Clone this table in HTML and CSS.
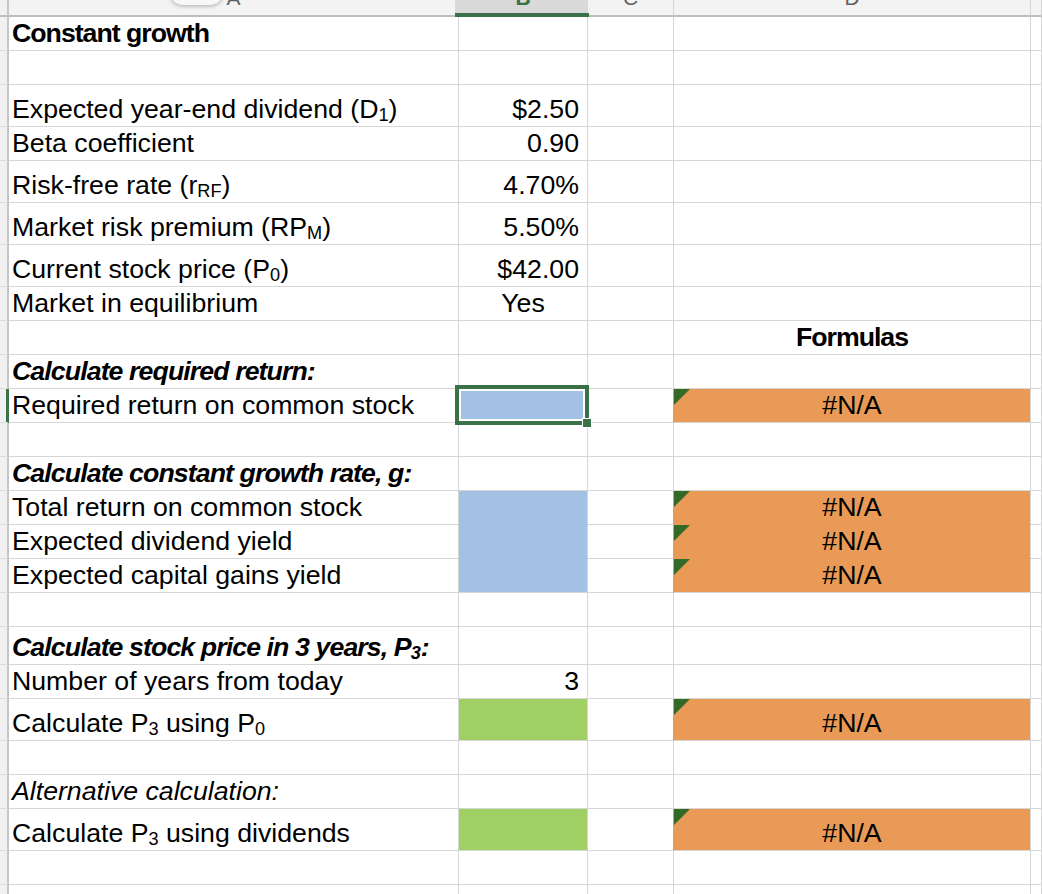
FILE: index.html
```html
<!DOCTYPE html>
<html lang="en">
<head>
<meta charset="utf-8">
<title>Constant growth</title>
<link rel="stylesheet" href="styles.css">
</head>
<body>
<div class="sheet">
  <div class="row hdr">
    <div class="rh"></div>
    <div class="ch"><span>A</span></div>
    <div class="ch sel"><span>B</span></div>
    <div class="ch"><span>C</span></div>
    <div class="ch"><span>D</span></div>
    <div class="ch"></div>
  </div>
  <div class="pill"></div>

  <div class="row">
    <div class="rh"></div>
    <div class="c bold"><span>Constant growth</span></div>
    <div class="c"></div><div class="c"></div><div class="c"></div><div class="c"></div>
  </div>
  <div class="row">
    <div class="rh"></div>
    <div class="c"></div><div class="c"></div><div class="c"></div><div class="c"></div><div class="c"></div>
  </div>
  <div class="row tall">
    <div class="rh"></div>
    <div class="c"><span>Expected year-end dividend (D<sub class="sb">1</sub>)</span></div>
    <div class="c num"><span>$2.50</span></div>
    <div class="c"></div><div class="c"></div><div class="c"></div>
  </div>
  <div class="row">
    <div class="rh"></div>
    <div class="c"><span>Beta coefficient</span></div>
    <div class="c num"><span>0.90</span></div>
    <div class="c"></div><div class="c"></div><div class="c"></div>
  </div>
  <div class="row tall">
    <div class="rh"></div>
    <div class="c"><span>Risk-free rate (r<sub class="sb">RF</sub>)</span></div>
    <div class="c num"><span>4.70%</span></div>
    <div class="c"></div><div class="c"></div><div class="c"></div>
  </div>
  <div class="row tall">
    <div class="rh"></div>
    <div class="c"><span>Market risk premium (RP<sub class="sb">M</sub>)</span></div>
    <div class="c num"><span>5.50%</span></div>
    <div class="c"></div><div class="c"></div><div class="c"></div>
  </div>
  <div class="row tall">
    <div class="rh"></div>
    <div class="c"><span>Current stock price (P<sub class="sb">0</sub>)</span></div>
    <div class="c num"><span>$42.00</span></div>
    <div class="c"></div><div class="c"></div><div class="c"></div>
  </div>
  <div class="row">
    <div class="rh"></div>
    <div class="c"><span>Market in equilibrium</span></div>
    <div class="c ctr"><span>Yes</span></div>
    <div class="c"></div><div class="c"></div><div class="c"></div>
  </div>
  <div class="row">
    <div class="rh"></div>
    <div class="c"></div><div class="c"></div><div class="c"></div>
    <div class="c ctr bold"><span>Formulas</span></div>
    <div class="c"></div>
  </div>
  <div class="row">
    <div class="rh"></div>
    <div class="c bi"><span>Calculate required return:</span></div>
    <div class="c"></div><div class="c"></div><div class="c"></div><div class="c"></div>
  </div>
  <div class="row">
    <div class="rh active"></div>
    <div class="c"><span>Required return on common stock</span></div>
    <div class="c blue"><div class="selbox"><div class="handle"></div></div></div>
    <div class="c edge"></div>
    <div class="c ctr orange err"><span>#N/A</span></div>
    <div class="c"></div>
  </div>
  <div class="row">
    <div class="rh"></div>
    <div class="c"></div><div class="c"></div><div class="c"></div><div class="c"></div><div class="c"></div>
  </div>
  <div class="row">
    <div class="rh"></div>
    <div class="c bi"><span>Calculate constant growth rate, g:</span></div>
    <div class="c"></div><div class="c"></div><div class="c"></div><div class="c"></div>
  </div>
  <div class="row">
    <div class="rh"></div>
    <div class="c"><span>Total return on common stock</span></div>
    <div class="c blue join"></div>
    <div class="c edge"></div>
    <div class="c ctr orange join err"><span>#N/A</span></div>
    <div class="c"></div>
  </div>
  <div class="row">
    <div class="rh"></div>
    <div class="c"><span>Expected dividend yield</span></div>
    <div class="c blue join"></div>
    <div class="c edge"></div>
    <div class="c ctr orange join err"><span>#N/A</span></div>
    <div class="c"></div>
  </div>
  <div class="row">
    <div class="rh"></div>
    <div class="c"><span>Expected capital gains yield</span></div>
    <div class="c blue"></div>
    <div class="c edge"></div>
    <div class="c ctr orange err"><span>#N/A</span></div>
    <div class="c"></div>
  </div>
  <div class="row">
    <div class="rh"></div>
    <div class="c"></div><div class="c"></div><div class="c"></div><div class="c"></div><div class="c"></div>
  </div>
  <div class="row mid">
    <div class="rh"></div>
    <div class="c bi"><span>Calculate stock price in 3 years, P<sub class="sb">3</sub>:</span></div>
    <div class="c"></div><div class="c"></div><div class="c"></div><div class="c"></div>
  </div>
  <div class="row">
    <div class="rh"></div>
    <div class="c"><span>Number of years from today</span></div>
    <div class="c num"><span>3</span></div>
    <div class="c"></div><div class="c"></div><div class="c"></div>
  </div>
  <div class="row tall">
    <div class="rh"></div>
    <div class="c"><span>Calculate P<sub class="sb">3</sub> using P<sub class="sb">0</sub></span></div>
    <div class="c green"></div>
    <div class="c edge"></div>
    <div class="c ctr orange err"><span>#N/A</span></div>
    <div class="c"></div>
  </div>
  <div class="row">
    <div class="rh"></div>
    <div class="c"></div><div class="c"></div><div class="c"></div><div class="c"></div><div class="c"></div>
  </div>
  <div class="row">
    <div class="rh"></div>
    <div class="c it"><span>Alternative calculation:</span></div>
    <div class="c"></div><div class="c"></div><div class="c"></div><div class="c"></div>
  </div>
  <div class="row tall">
    <div class="rh"></div>
    <div class="c"><span>Calculate P<sub class="sb">3</sub> using dividends</span></div>
    <div class="c green"></div>
    <div class="c edge"></div>
    <div class="c ctr orange err"><span>#N/A</span></div>
    <div class="c"></div>
  </div>
  <div class="row">
    <div class="rh"></div>
    <div class="c"></div><div class="c"></div><div class="c"></div><div class="c"></div><div class="c"></div>
  </div>
  <div class="row">
    <div class="rh"></div>
    <div class="c"></div><div class="c"></div><div class="c"></div><div class="c"></div><div class="c"></div>
  </div>
</div>
</body>
</html>
```
FILE: styles.css
```css
* { box-sizing: border-box; }
html, body { margin: 0; background: #fff; }
body {
  font-family: "Liberation Sans", Arial, Helvetica, sans-serif;
  font-size: 26.7px;
  color: #000;
  width: 1042px;
  height: 894px;
  overflow: hidden;
}
.sheet { position: relative; }
.row {
  display: grid;
  grid-template-columns: 9px 450px 129px 86px 357px 1fr;
  height: 34px;
}
.row.tall { height: 42px; }
.row.mid { height: 38px; }
.row.hdr { height: 17px; }

.rh {
  background: #f1f1f1;
  border-right: 2px solid #c6c6c6;
  border-bottom: 1px solid #dcdcdc;
}
.hdr .rh { border-bottom: 2px solid #bdbdbd; }
.rh.active {
  border-right-color: #3a7148;
  box-shadow: inset -1px 0 0 #3a7148;
}

.ch {
  position: relative;
  background: #f3f3f3;
  border-right: 1px solid #d4d4d4;
  border-bottom: 2px solid #bdbdbd;
  overflow: hidden;
  display: flex;
  justify-content: center;
  align-items: flex-start;
  color: #626262;
  font-size: 21px;
  line-height: 21px;
}
.ch span { margin-top: -13px; position: relative; z-index: 1; }
.ch.sel { overflow: visible; background: #d9d9d9; color: #3a7148; font-weight: 700; }
.ch.sel::before {
  content: "";
  position: absolute;
  left: -4px; right: -2px; top: 0; bottom: 0;
  background: #d9d9d9;
}
.ch.sel::after {
  content: "";
  position: absolute;
  left: -4px; right: -2px; bottom: -2px;
  height: 4px;
  background: #3a7148;
  z-index: 2;
}
.pill {
  position: absolute;
  left: 170px;
  top: -22px;
  width: 53px;
  height: 27px;
  border-radius: 13px;
  background: #f7f7f7;
  box-shadow: 0 1px 4px rgba(0, 0, 0, 0.3);
  z-index: 3;
}

.c {
  position: relative;
  display: flex;
  align-items: flex-end;
  border-right: 1px solid #d6d6d6;
  border-bottom: 1px solid #d6d6d6;
  padding: 0 3px 2px 3px;
  line-height: 30px;
  white-space: nowrap;
}
.c > span { display: block; }
.num { justify-content: flex-end; padding-right: 8px; }
.ctr { justify-content: center; }
.bold { font-weight: 700; letter-spacing: -1px; }
.bi { font-weight: 700; font-style: italic; letter-spacing: -0.9px; }
.it { font-style: italic; }
.sb { font-size: 0.68em; vertical-align: -3px; line-height: 0; letter-spacing: 0; }

.blue { background: #a3c1e5; }
.green { background: #a0cf63; }
.orange { background: #e99a56; }
.blue.join { border-bottom-color: #a3c1e5; }
.orange.join { border-bottom-color: #e99a56; }
.edge { border-right-color: #e99a56; }

.err::before {
  content: "";
  position: absolute;
  left: 0; top: 0;
  width: 16px; height: 16px;
  background: #336a27;
  clip-path: polygon(0 0, 100% 0, 0 100%);
}

.selbox {
  position: absolute;
  left: -4px; top: -4px; right: -2px; bottom: -3px;
  border: 4px solid #3a7148;
  box-shadow: inset 0 0 0 2px #fff;
  z-index: 5;
}
.handle {
  position: absolute;
  right: -7px; bottom: -7px;
  width: 10px; height: 10px;
  background: #3a7148;
  border: 1px solid #fff;
}
```
